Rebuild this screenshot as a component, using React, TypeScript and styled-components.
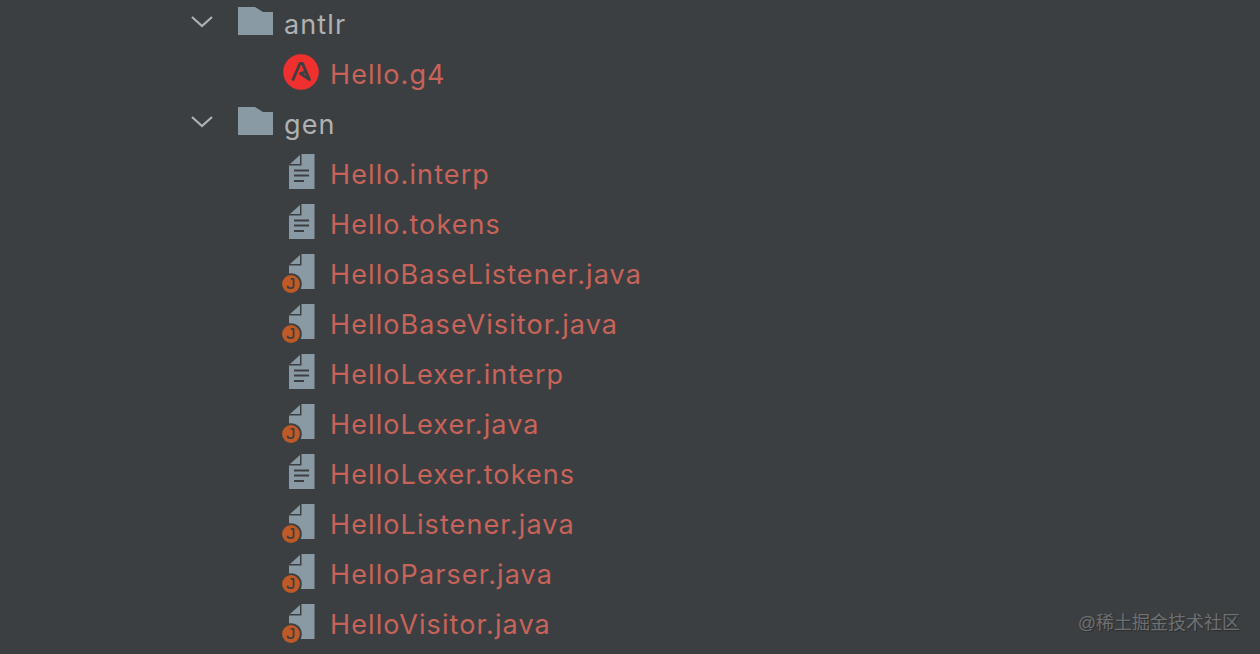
import styled, { createGlobalStyle } from 'styled-components'

const GlobalStyle = createGlobalStyle`
  html, body {
    margin: 0;
    padding: 0;
    background: #3c3f41;
  }
`

type FileKind = 'antlr' | 'text' | 'java'

interface Entry {
  name: string
  kind: FileKind
}

const genFiles: Entry[] = [
  { name: 'Hello.interp', kind: 'text' },
  { name: 'Hello.tokens', kind: 'text' },
  { name: 'HelloBaseListener.java', kind: 'java' },
  { name: 'HelloBaseVisitor.java', kind: 'java' },
  { name: 'HelloLexer.interp', kind: 'text' },
  { name: 'HelloLexer.java', kind: 'java' },
  { name: 'HelloLexer.tokens', kind: 'text' },
  { name: 'HelloListener.java', kind: 'java' },
  { name: 'HelloParser.java', kind: 'java' },
  { name: 'HelloVisitor.java', kind: 'java' },
]

const Chevron = () => (
  <svg width="24" height="14" viewBox="0 0 24 14">
    <path d="M2 2 L12 11 L22 2" fill="none" stroke="#afb1b3" strokeWidth="2.2" />
  </svg>
)

const FolderIcon = () => (
  <svg width="35" height="28" viewBox="0 0 35 28">
    <path d="M0 0 H17 L25 5 H35 V28 H0 Z" fill="#8a9aa5" />
  </svg>
)

const AntlrIcon = () => (
  <svg width="36" height="36" viewBox="0 0 36 36">
    <circle cx="18" cy="18" r="17.8" fill="#f0302f" />
    <path
      d="M10 25.5 L17 9.5 H19.5 L26.5 25.5 L17.5 19.5 L22 18"
      fill="none"
      stroke="#3c3f41"
      strokeWidth="2.8"
      strokeLinejoin="round"
      strokeLinecap="round"
    />
  </svg>
)

const PageIcon = ({ lines }: { lines: boolean }) => (
  <svg width="26" height="36" viewBox="0 0 26 36">
    <path d="M1 10 L11 1 V10 Z" fill="#8a9aa5" />
    <path d="M12.5 0 H25.5 V35 H0 V11.5 H12.5 Z" fill="#8a9aa5" />
    {lines && (
      <g fill="#3c3f41">
        <rect x="5" y="15.5" width="15" height="2" />
        <rect x="5" y="20.5" width="15" height="2" />
        <rect x="5" y="26" width="10" height="2" />
      </g>
    )}
  </svg>
)

const JavaBadge = () => (
  <svg width="22" height="22" viewBox="0 0 22 22">
    <circle cx="11" cy="11" r="10.8" fill="#3c3f41" />
    <circle cx="11" cy="11" r="8.9" fill="#bf5a26" />
    <path
      d="M7.6 12.8 Q7.6 15.2 10 15.2 H11 Q13.6 15.2 13.6 12.8 V5.5 M10.8 5.8 H13.6"
      fill="none"
      stroke="#3c3f41"
      strokeWidth="1.8"
    />
  </svg>
)

const FileIcon = ({ kind }: { kind: FileKind }) => {
  if (kind === 'antlr') return <AntlrIcon />
  return (
    <PageWrap>
      <PageIcon lines={kind === 'text'} />
      {kind === 'java' && (
        <BadgeSpot>
          <JavaBadge />
        </BadgeSpot>
      )}
    </PageWrap>
  )
}

const FileRow = ({ entry }: { entry: Entry }) => (
  <Row $indent={283}>
    <IconSlot>
      <FileIcon kind={entry.kind} />
    </IconSlot>
    <FileName>{entry.name}</FileName>
  </Row>
)

const FolderRow = ({ name }: { name: string }) => (
  <Row $indent={190}>
    <ChevronSlot>
      <Chevron />
    </ChevronSlot>
    <FolderSlot>
      <FolderIcon />
    </FolderSlot>
    <FolderName>{name}</FolderName>
  </Row>
)

export default function App() {
  return (
    <Page>
      <GlobalStyle />
      <Tree>
        <FolderRow name="antlr" />
        <FileRow entry={{ name: 'Hello.g4', kind: 'antlr' }} />
        <FolderRow name="gen" />
        {genFiles.map((file) => (
          <FileRow key={file.name} entry={file} />
        ))}
      </Tree>
      <Watermark>@稀土掘金技术社区</Watermark>
    </Page>
  )
}

const Page = styled.div`
  position: relative;
  width: 1260px;
  height: 654px;
  overflow: hidden;
  background: #3c3f41;
`

const Tree = styled.div`
  display: flex;
  flex-direction: column;
`

const Row = styled.div<{ $indent: number }>`
  display: flex;
  align-items: center;
  height: 50px;
  padding-left: ${(props) => props.$indent}px;
  font-family: Inter, 'Noto Sans', sans-serif;
  font-size: 27px;
  letter-spacing: 1.1px;
  &:first-child {
    margin-top: -1px;
  }
`

const ChevronSlot = styled.div`
  display: flex;
  width: 48px;
  margin-top: -4px;
`

const FolderSlot = styled.div`
  display: flex;
  width: 46px;
  margin-top: -6px;
`

const IconSlot = styled.div`
  display: flex;
  justify-content: flex-end;
  width: 36px;
  margin-top: -4px;
  margin-right: 11px;
`

const PageWrap = styled.div`
  position: relative;
  display: flex;
  margin-right: 4px;
`

const BadgeSpot = styled.div`
  position: absolute;
  left: -9px;
  bottom: -5px;
  display: flex;
`

const FolderName = styled.span`
  color: #afb1b3;
`

const FileName = styled.span`
  color: #c8635a;
`

const Watermark = styled.div`
  position: absolute;
  right: 20px;
  bottom: 20px;
  font-family: 'Liberation Sans', 'Noto Sans CJK SC', sans-serif;
  font-size: 18px;
  line-height: 22px;
  color: #6e7072;
  text-shadow: 1px 1px 1px #2a2c2e;
`
